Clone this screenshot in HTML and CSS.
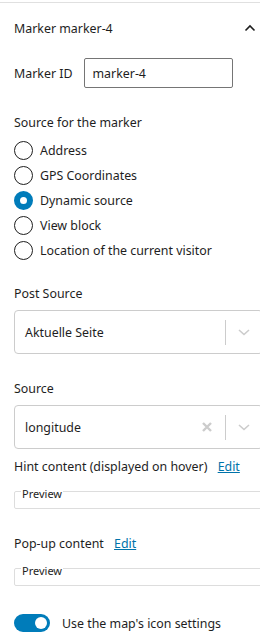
FILE: index.html
```html
<!DOCTYPE html>
<html lang="en">
<head>
    <meta charset="UTF-8">
    <meta name="viewport" content="width=device-width, initial-scale=1.0">
    <title>Marker settings</title>
    <link rel="stylesheet" href="styles.css">
</head>
<body>

    <div class="panel">
        <div class="panel-head">
            <span>Marker marker-4</span>
            <svg class="toggle-icon" width="12" height="8" viewBox="0 0 12 8"><path d="M1.5 6.5 L6 2 L10.5 6.5" fill="none" stroke="#1e1e1e" stroke-width="1.6"/></svg>
        </div>

        <div class="panel-body">
            <div class="id-row">
                <label for="markerId">Marker ID</label>
                <input type="text" id="markerId" value="marker-4">
            </div>

            <div class="field source-field">
                <div class="field-label">Source for the marker</div>
                <div class="radio-list">
                    <div class="radio"><span class="circle"></span>Address</div>
                    <div class="radio"><span class="circle"></span>GPS Coordinates</div>
                    <div class="radio checked"><span class="circle"></span>Dynamic source</div>
                    <div class="radio"><span class="circle"></span>View block</div>
                    <div class="radio"><span class="circle"></span>Location of the current visitor</div>
                </div>
            </div>

            <div class="field post-field">
                <div class="field-label">Post Source</div>
                <div class="select">
                    <span class="select-value">Aktuelle Seite</span>
                    <span class="sep"></span>
                    <span class="indicator">
                        <svg width="20" height="20" viewBox="0 0 20 20"><path d="M5 8 L10 12.5 L15 8" fill="none" stroke="#ccc" stroke-width="1.6"/></svg>
                    </span>
                </div>
            </div>

            <div class="field src-field">
                <div class="field-label">Source</div>
                <div class="select">
                    <span class="select-value">longitude</span>
                    <span class="indicator">
                        <svg width="20" height="20" viewBox="0 0 20 20"><path d="M6 6 L14 14 M14 6 L6 14" fill="none" stroke="#ccc" stroke-width="2.4"/></svg>
                    </span>
                    <span class="sep"></span>
                    <span class="indicator">
                        <svg width="20" height="20" viewBox="0 0 20 20"><path d="M5 8 L10 12.5 L15 8" fill="none" stroke="#ccc" stroke-width="1.6"/></svg>
                    </span>
                </div>
            </div>

            <div class="content-field hint-field">
                <div class="field-label">Hint content (displayed on hover) <a href="#">Edit</a></div>
                <fieldset class="preview"><legend>Preview</legend></fieldset>
            </div>

            <div class="content-field popup-field">
                <div class="field-label">Pop-up content <a href="#">Edit</a></div>
                <fieldset class="preview"><legend>Preview</legend></fieldset>
            </div>

            <div class="switch-row">
                <span class="switch"><span class="knob"></span></span>
                Use the map's icon settings
            </div>
        </div>
    </div>

</body>
</html>
```

FILE: styles.css
```css
body {
    margin: 0;
    padding: 0;
    background-color: #fff;
    font-family: "Noto Sans", "Open Sans", sans-serif;
    font-size: 12.4px;
    color: #1e1e1e;
    overflow: hidden;
}

.panel {
    width: 290px;
    border-top: 1px solid #e0e0e0;
    margin-top: 2px;
}

.panel-head {
    display: flex;
    align-items: center;
    justify-content: space-between;
    height: 50px;
    padding: 0 0 0 14px;
    width: 242px;
}

.toggle-icon {
    display: block;
}

.panel-body {
    padding: 0 0 0 14px;
}

.id-row {
    display: flex;
    align-items: center;
    gap: 11px;
    margin-top: 5px;
}

.id-row input {
    width: 149px;
    height: 30px;
    box-sizing: border-box;
    border: 1px solid #757575;
    border-radius: 2px;
    padding: 0 8px;
    font-family: inherit;
    font-size: 12.4px;
    color: #1e1e1e;
}

.field-label {
    line-height: 20px;
}

.field-label a {
    color: #0073aa;
    margin-left: 7px;
}

.source-field {
    margin-top: 25px;
}

.radio-list {
    margin-top: 5px;
}

.radio {
    display: flex;
    align-items: center;
    gap: 7px;
    height: 25px;
}

.circle {
    width: 19px;
    height: 19px;
    box-sizing: border-box;
    border: 1px solid #1e1e1e;
    border-radius: 50%;
}

.radio.checked .circle {
    border: 6px solid #007cba;
    background-color: #fff;
}

.post-field {
    margin-top: 21px;
}

.src-field {
    margin-top: 25px;
}

.select {
    display: flex;
    align-items: center;
    width: 249px;
    height: 44px;
    box-sizing: border-box;
    border: 1px solid #ccc;
    border-radius: 4px;
    margin-top: 6px;
    padding-left: 10px;
}

.select-value {
    flex: 1;
}

.sep {
    width: 1px;
    height: 25px;
    background-color: #ccc;
}

.indicator {
    display: flex;
    padding: 8px;
}

.hint-field {
    margin-top: 8px;
}

.popup-field {
    margin-top: 25px;
}

.preview {
    width: 260px;
    box-sizing: border-box;
    height: 28px;
    margin: 4px 0 0 0;
    padding: 0 6px;
    border: 1px solid #ddd;
    border-radius: 2px;
}

.preview legend {
    font-size: 11px;
    padding: 6px 1px 0;
    line-height: 14px;
}

.switch-row {
    display: flex;
    align-items: center;
    gap: 12px;
    margin-top: 28px;
}

.switch {
    position: relative;
    width: 36px;
    height: 18px;
    border-radius: 9px;
    background-color: #007cba;
}

.knob {
    position: absolute;
    right: 3px;
    top: 3px;
    width: 12px;
    height: 12px;
    border-radius: 50%;
    background-color: #fff;
}
```
